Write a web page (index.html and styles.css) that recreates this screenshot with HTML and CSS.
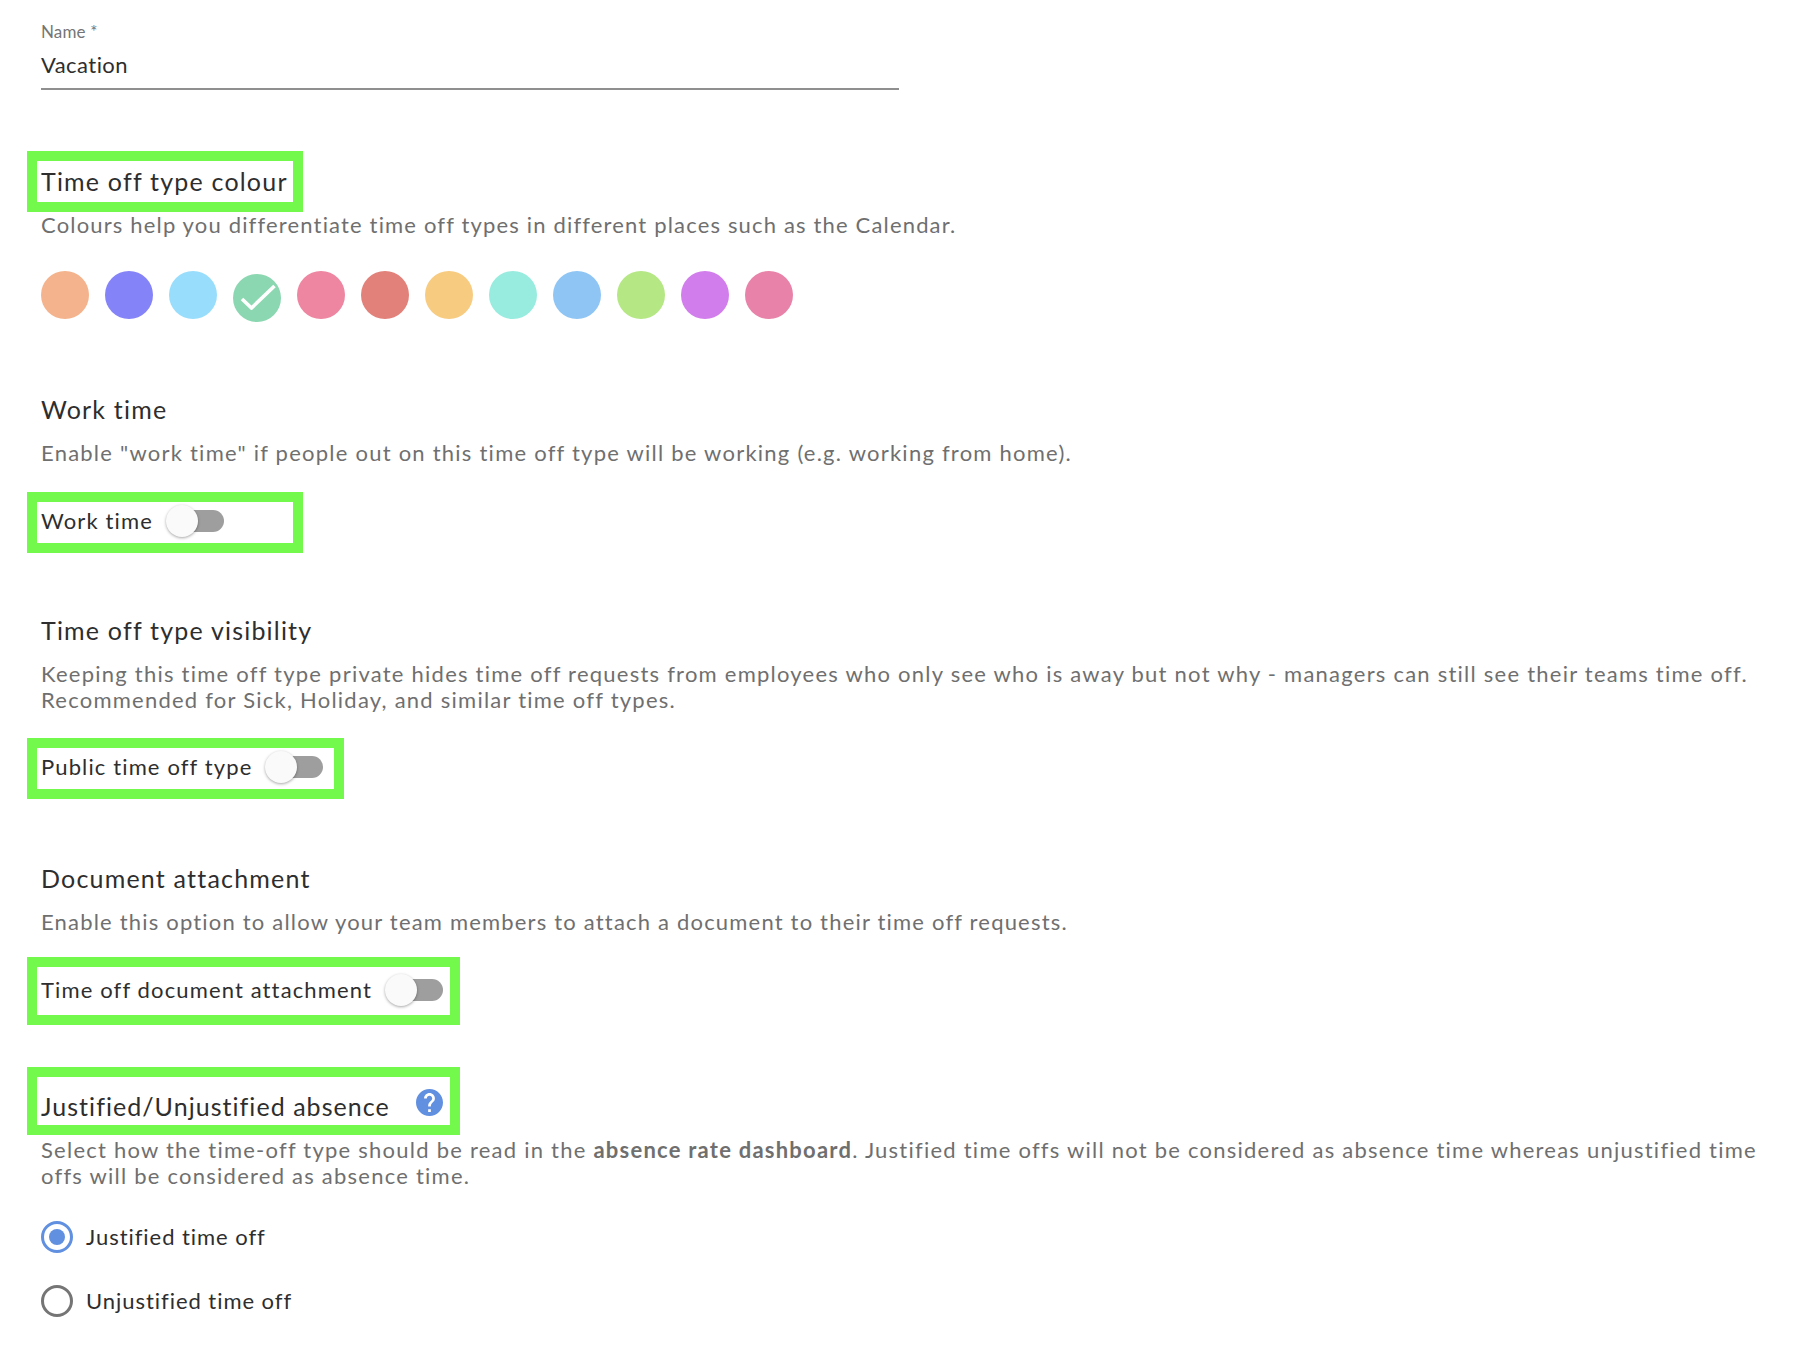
FILE: index.html
```html
<!DOCTYPE html>
<html lang="en">
<head>
<meta charset="utf-8">
<title>Time off type</title>
<link rel="stylesheet" href="styles.css">
</head>
<body>
<main class="form">
  <div class="field">
    <label class="field-label">Name *</label>
    <div class="field-value">Vacation</div>
  </div>

  <div class="mark mark-w276 mark-first"><h2 class="heading">Time off type colour</h2></div>
  <p class="desc desc-first">Colours help you differentiate time off types in different places such as the Calendar.</p>
  <div class="swatches">
    <span class="swatch c1"></span>
    <span class="swatch c2"></span>
    <span class="swatch c3"></span>
    <span class="swatch c4 checked">
      <svg class="check" viewBox="0 0 36 26" width="36" height="26"><path d="M2 15l9.500 9L34.500 2" fill="none" stroke="#fff" stroke-width="3.600"/></svg>
    </span>
    <span class="swatch c5"></span>
    <span class="swatch c6"></span>
    <span class="swatch c7"></span>
    <span class="swatch c8"></span>
    <span class="swatch c9"></span>
    <span class="swatch c10"></span>
    <span class="swatch c11"></span>
    <span class="swatch c12"></span>
  </div>

  <h2 class="heading section-work">Work time</h2>
  <p class="desc desc-long">Enable "work time" if people out on this time off type will be working (e.g. working from home).</p>
  <div class="mark mark-w276 mark-toggle mark-work">
    <span class="label label-wide">Work time</span>
    <span class="switch"><span class="knob"></span><span class="track"></span></span>
  </div>

  <h2 class="heading section-vis">Time off type visibility</h2>
  <p class="desc desc-long">Keeping this time off type private hides time off requests from employees who only see who is away but not why - managers can still see their teams time off.<br>Recommended for Sick, Holiday, and similar time off types.</p>
  <div class="mark mark-w317 mark-toggle mark-public">
    <span class="label label-wide">Public time off type</span>
    <span class="switch"><span class="knob"></span><span class="track"></span></span>
  </div>

  <h2 class="heading section-doc">Document attachment</h2>
  <p class="desc">Enable this option to allow your team members to attach a document to their time off requests.</p>
  <div class="mark mark-w433 mark-tall mark-toggle mark-doc">
    <span class="label label-wide">Time off document attachment</span>
    <span class="switch"><span class="knob"></span><span class="track"></span></span>
  </div>

  <div class="mark mark-w433 mark-tall mark-justified">
    <h2 class="heading heading-low">Justified/Unjustified absence</h2>
    <svg class="help" viewBox="2 2 20 20" width="27" height="27"><path fill="#6190e0" d="M12 2C6.480 2 2 6.480 2 12s4.480 10 10 10 10-4.480 10-10S17.520 2 12 2zm1 17h-2v-2h2v2zm2.070-7.750l-.9.920C13.450 12.900 13 13.500 13 15h-2v-.5c0-1.100.45-2.100 1.170-2.830l1.240-1.260c.37-.36.59-.86.59-1.410 0-1.100-.9-2-2-2s-2 .9-2 2H8c0-2.210 1.790-4 4-4s4 1.790 4 4c0 .88-.36 1.680-.93 2.250z"/></svg>
  </div>
  <p class="desc desc-long desc-just">Select how the time-off type should be read in the <strong>absence rate dashboard</strong>. Justified time offs will not be considered as absence time whereas unjustified time<br>offs will be considered as absence time.</p>

  <div class="radios">
    <div class="radio-row"><span class="radio radio-on"><span class="radio-dot"></span></span><span class="label">Justified time off</span></div>
    <div class="radio-row"><span class="radio"></span><span class="label">Unjustified time off</span></div>
  </div>
</main>
</body>
</html>
```
FILE: styles.css
```css
* { box-sizing: border-box; }
html, body { margin: 0; padding: 0; background: #fff; }
body { font-family: "Lato", "Noto Sans", sans-serif; color: #2e2e2e; }
.form { padding: 22px 0 0 41px; height: 1352px; overflow: hidden; }

.field { width: 858px; }
.field-label { display: block; font-size: 17px; line-height: 20px; color: #757575; letter-spacing: .15px; }
.field-value { margin-top: 8px; padding-bottom: 8px; font-size: 22px; line-height: 30px; border-bottom: 2px solid #8f8f8f; letter-spacing: .45px; }

.heading { margin: 0; font-size: 25px; line-height: 32px; font-weight: 400; letter-spacing: 1.2px; }
.section-work { margin-top: 71px; }
.section-vis { margin-top: 61px; }
.section-doc { margin-top: 63px; }
.heading-low { margin-top: 13px; letter-spacing: 1.04px; }

.desc { margin: 15px 0 0; font-size: 22px; line-height: 26px; color: #6f6f6f; letter-spacing: 1.19px; white-space: nowrap; }
.desc-long { letter-spacing: 1.235px; }
.desc-first { margin-top: 0; letter-spacing: 1.165px; }
.desc-just { margin-top: 2px; }
.desc strong { font-weight: 700; }

.mark { display: flex; align-items: center; margin-left: -14px; padding-left: 4px; padding-bottom: 2px; border: 10px solid #72f94b; height: 61px; }
.mark-toggle { padding-bottom: 3px; }
.mark-w276 { width: 276px; }
.mark-w317 { width: 317px; }
.mark-w433 { width: 433px; }
.mark-tall { height: 68px; }
.mark-first { margin-top: 61px; }
.mark-work { margin-top: 26px; }
.mark-public { margin-top: 25px; }
.mark-doc { margin-top: 22px; }
.mark-justified { margin-top: 42px; justify-content: space-between; padding-right: 7px; padding-bottom: 0; align-items: flex-start; }
.mark-justified .help { margin-top: 12px; }

.label { font-size: 22px; line-height: 30px; letter-spacing: .95px; white-space: nowrap; }
.label-wide { letter-spacing: 1.13px; }

.switch { display: inline-flex; align-items: center; margin-left: 13px; }
.knob { width: 32px; height: 32px; border-radius: 50%; background: #fafafa; box-shadow: 0 1px 3px rgba(0,0,0,.35); position: relative; z-index: 1; }
.track { width: 54px; height: 22px; margin-left: -28px; border-radius: 11px; background: #9e9e9e; }

.swatches { display: flex; align-items: flex-start; gap: 16px; margin-top: 33px; height: 51px; }
.swatch { display: flex; align-items: center; justify-content: center; width: 48px; height: 48px; border-radius: 50%; }
.checked { margin-top: 3px; }
.check { margin-top: -2px; margin-left: 2px; }
.c1 { background: #f4b38c; }
.c2 { background: #8583f8; }
.c3 { background: #98defc; }
.c4 { background: #8bd7b1; }
.c5 { background: #ee85a1; }
.c6 { background: #e2817a; }
.c7 { background: #f7cb80; }
.c8 { background: #98ecdf; }
.c9 { background: #8ec5f5; }
.c10 { background: #b5e784; }
.c11 { background: #d27dec; }
.c12 { background: #e882a8; }

.radios { display: flex; flex-direction: column; gap: 32px; margin-top: 32px; }
.radio-row { display: flex; align-items: center; gap: 13px; height: 32px; }
.radio { display: flex; align-items: center; justify-content: center; width: 32px; height: 32px; border-radius: 50%; border: 3px solid #757575; }
.radio-on { border-color: #6190e0; }
.radio-dot { width: 16px; height: 16px; border-radius: 50%; background: #6190e0; }
```
